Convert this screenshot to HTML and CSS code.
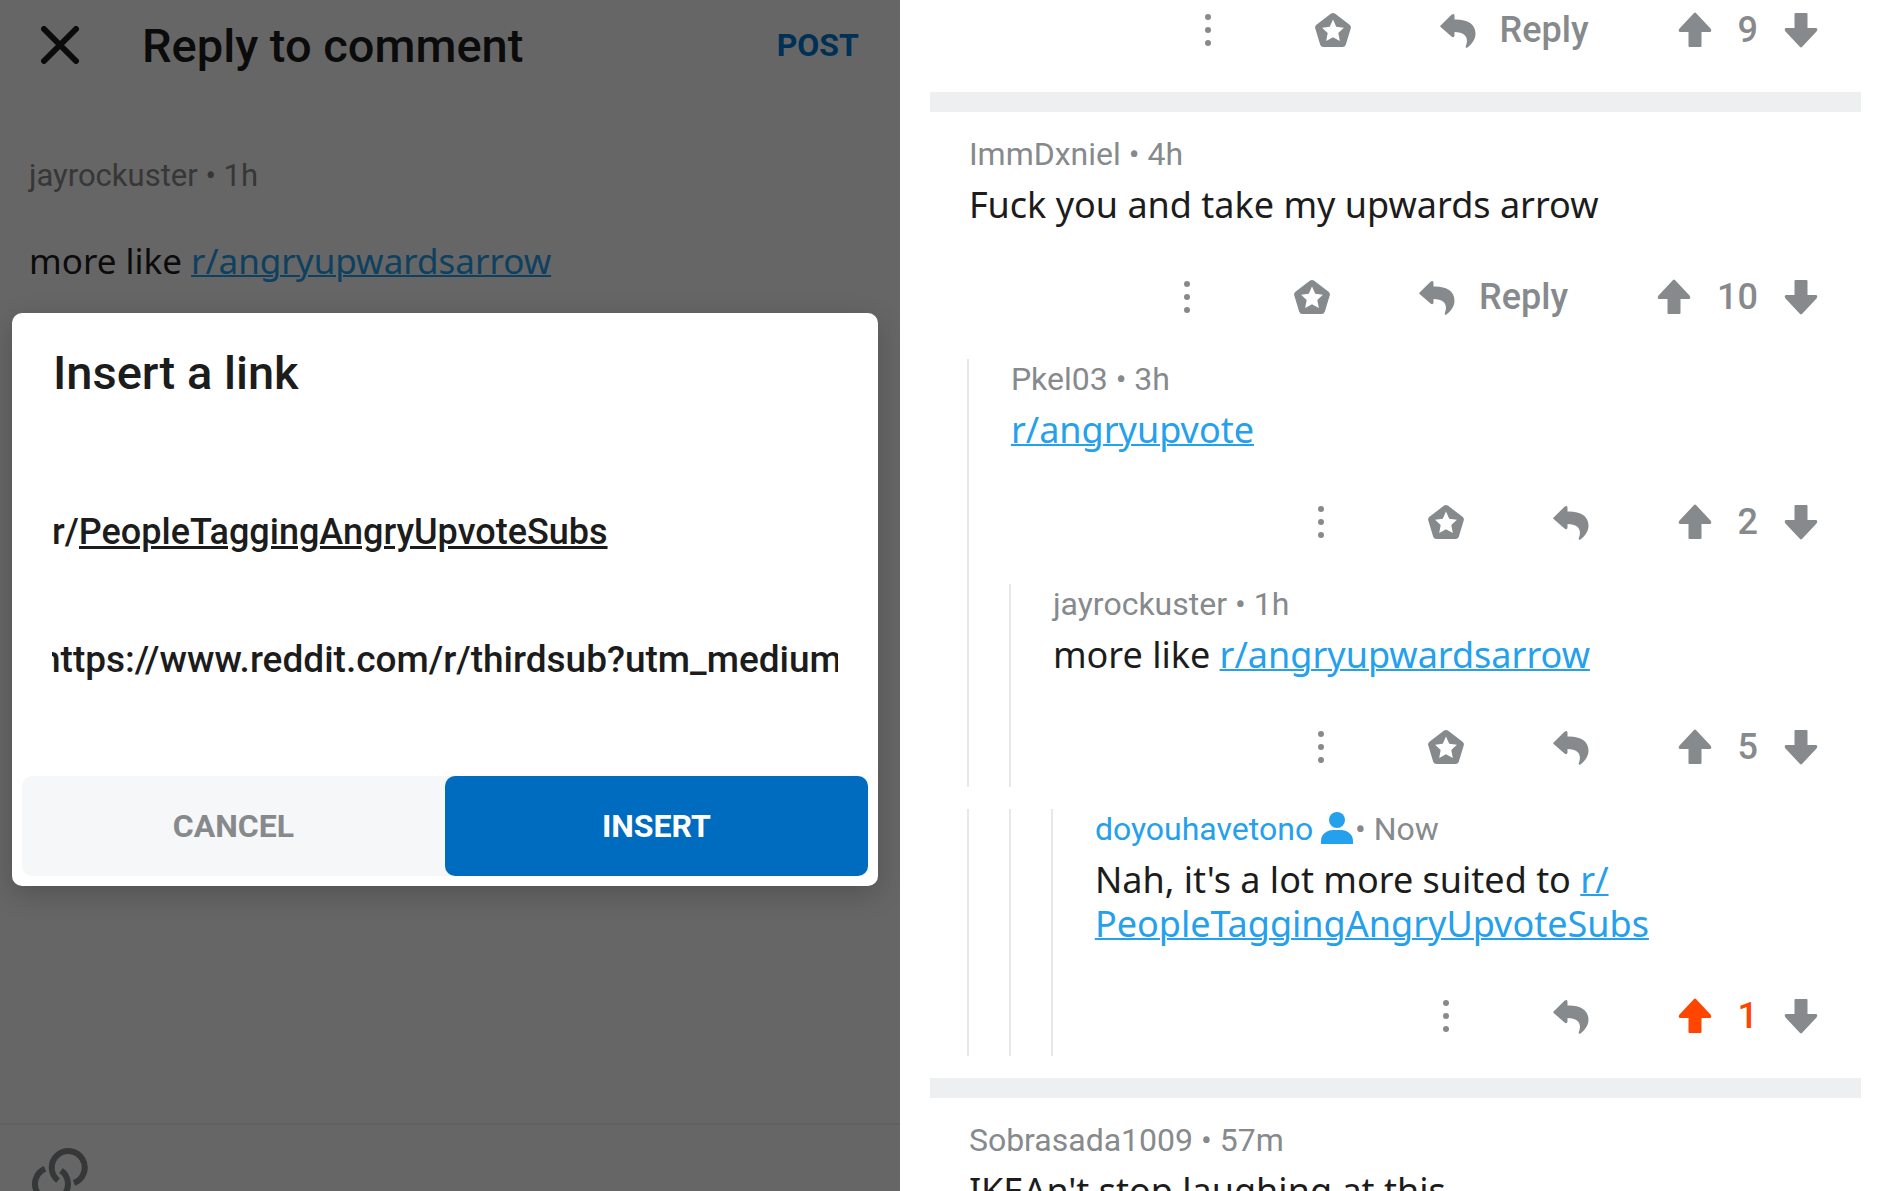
FILE: index.html
```html
<!DOCTYPE html>
<html lang="en">
<head>
  <meta charset="UTF-8">
  <meta name="viewport" content="width=device-width, initial-scale=1.0">
  <title>Reply to comment</title>
  <link rel="stylesheet" href="styles.css">
</head>
<body>
  <!-- Icons -->
  <svg class="sprite" aria-hidden="true">
    <symbol id="dots" viewBox="0 0 36 36">
      <circle cx="18" cy="5" r="3"/><circle cx="18" cy="18" r="3"/><circle cx="18" cy="31" r="3"/>
    </symbol>
    <symbol id="award" viewBox="-1 0 38 36">
      <path fill-rule="evenodd" d="M16 0.700Q18 -0.700 20 0.700L35.500 12.500Q37.500 14 36.700 16.500L31.500 33.500Q30.800 36 28 36H8Q5.200 36 4.500 33.500L-0.700 16.500Q-1.500 14 0.500 12.500ZM18 7L14.600 14.500L6.500 15.500L12.400 21.200L10.800 29.500L18 25.600L25.200 29.500L23.600 21.200L29.500 15.500L21.400 14.500Z"/>
    </symbol>
    <symbol id="reply" viewBox="0 0 36 36">
      <path d="M0.600 13.500L11.500 2.800Q14.500 0.500 14.500 4V7.500C27 7 35.500 12 35.500 21.500C35.500 27 32.500 31.500 27.500 35.500Q25.500 36.500 25.700 34.500C29 26.500 26 20 14.500 20V23.500Q14 26.500 11.500 24.500L0.600 14.900Q-0.200 14.200 0.600 13.500Z"/>
    </symbol>
    <symbol id="up" viewBox="0 0 34 36">
      <path d="M15.800 1.200Q17 0 18.200 1.200L32.500 16.500Q34.500 20 31.500 20H23.500V34Q23.500 35 22.500 35H11.500Q10.500 35 10.500 34V20H2.500Q-0.500 20 1.500 16.500Z"/>
    </symbol>
    <symbol id="down" viewBox="0 0 34 36">
      <path d="M15.800 34.800Q17 36 18.200 34.800L32.500 19.500Q34.500 16 31.500 16H23.500V2Q23.500 1 22.500 1H11.500Q10.500 1 10.500 2V16H2.500Q-0.500 16 1.500 19.500Z"/>
    </symbol>
  </svg>

  <div class="app">
    <section class="composer">
      <header class="composer-header">
        <button class="close" aria-label="Close">
          <svg width="38" height="38" viewBox="0 0 38 38"><path d="M3 3L35 35M35 3L3 35" stroke="#1c1c1c" stroke-width="6" stroke-linecap="round"/></svg>
        </button>
        <h1>Reply to comment</h1>
        <button class="post">POST</button>
      </header>
      <div class="parent">
        <p class="meta">jayrockuster • 1h</p>
        <p class="text">more like <a href="#">r/angryupwardsarrow</a></p>
      </div>
      <footer class="toolbar">
        <button aria-label="Add link">
          <svg width="56" height="56" viewBox="0 0 56 56" fill="none" stroke="#878a8c" stroke-width="6">
            <path d="M26 32.500A16.500 16.500 0 1 1 42 35"/>
            <path d="M13 20.800A16.500 16.500 0 1 0 29 22.500"/>
          </svg>
        </button>
      </footer>

      <div class="overlay">
        <form class="dialog" role="dialog" aria-labelledby="dialogTitle">
          <h2 id="dialogTitle">Insert a link</h2>
          <div class="field">
            <label for="linkName">r/</label>
            <input class="composing" type="text" id="linkName" value="PeopleTaggingAngryUpvoteSubs" spellcheck="false">
          </div>
          <div class="field url">
            <input type="text" id="linkUrl" aria-label="Link" value="https://www.reddit.com/r/thirdsub?utm_medium=android_app" spellcheck="false">
          </div>
          <div class="dialog-buttons">
            <button class="cancel" type="button">CANCEL</button>
            <button class="insert" type="button">INSERT</button>
          </div>
        </form>
      </div>
    </section>

    <main class="feed">
      <div class="actions first">
        <button aria-label="More"><svg class="icon"><use href="#dots"/></svg></button>
        <button aria-label="Give award"><svg class="icon"><use href="#award"/></svg></button>
        <button><svg class="icon"><use href="#reply"/></svg>Reply</button>
        <div class="votes">
          <button aria-label="Upvote"><svg class="arrow"><use href="#up"/></svg></button>
          <span>9</span>
          <button aria-label="Downvote"><svg class="arrow"><use href="#down"/></svg></button>
        </div>
      </div>

      <div class="separator"></div>

      <article class="comment top">
        <div class="content">
          <p class="meta">ImmDxniel • 4h</p>
          <p class="text">Fuck you and take my upwards arrow</p>
          <div class="actions">
            <button aria-label="More"><svg class="icon"><use href="#dots"/></svg></button>
            <button aria-label="Give award"><svg class="icon"><use href="#award"/></svg></button>
            <button><svg class="icon"><use href="#reply"/></svg>Reply</button>
            <div class="votes">
              <button aria-label="Upvote"><svg class="arrow"><use href="#up"/></svg></button>
              <span>10</span>
              <button aria-label="Downvote"><svg class="arrow"><use href="#down"/></svg></button>
            </div>
          </div>
        </div>
      </article>

      <article class="comment">
        <i class="line"></i>
        <div class="content">
          <p class="meta">Pkel03 • 3h</p>
          <p class="text"><a href="#">r/angryupvote</a></p>
          <div class="actions">
            <button aria-label="More"><svg class="icon"><use href="#dots"/></svg></button>
            <button aria-label="Give award"><svg class="icon"><use href="#award"/></svg></button>
            <button aria-label="Reply"><svg class="icon"><use href="#reply"/></svg></button>
            <div class="votes">
              <button aria-label="Upvote"><svg class="arrow"><use href="#up"/></svg></button>
              <span>2</span>
              <button aria-label="Downvote"><svg class="arrow"><use href="#down"/></svg></button>
            </div>
          </div>
        </div>
      </article>

      <article class="comment last">
        <i class="line"></i>
        <i class="line"></i>
        <div class="content">
          <p class="meta">jayrockuster • 1h</p>
          <p class="text">more like <a href="#">r/angryupwardsarrow</a></p>
          <div class="actions">
            <button aria-label="More"><svg class="icon"><use href="#dots"/></svg></button>
            <button aria-label="Give award"><svg class="icon"><use href="#award"/></svg></button>
            <button aria-label="Reply"><svg class="icon"><use href="#reply"/></svg></button>
            <div class="votes">
              <button aria-label="Upvote"><svg class="arrow"><use href="#up"/></svg></button>
              <span>5</span>
              <button aria-label="Downvote"><svg class="arrow"><use href="#down"/></svg></button>
            </div>
          </div>
        </div>
      </article>

      <article class="comment last">
        <i class="line"></i>
        <i class="line"></i>
        <i class="line"></i>
        <div class="content">
          <p class="meta"><a href="#">doyouhavetono</a>
            <svg class="user" viewBox="0 0 32 32"><circle cx="16" cy="8" r="8"/><path d="M0 32V29C0 22 6 18 12 18H20C26 18 32 22 32 29V32Z"/></svg>
            • Now</p>
          <p class="text">Nah, it's a lot more suited to <a href="#">r/<wbr>PeopleTaggingAngryUpvoteSubs</a></p>
          <div class="actions">
            <button aria-label="More"><svg class="icon"><use href="#dots"/></svg></button>
            <button aria-label="Reply"><svg class="icon"><use href="#reply"/></svg></button>
            <div class="votes upvoted">
              <button aria-label="Upvote"><svg class="arrow"><use href="#up"/></svg></button>
              <span>1</span>
              <button aria-label="Downvote"><svg class="arrow"><use href="#down"/></svg></button>
            </div>
          </div>
        </div>
      </article>

      <div class="separator"></div>

      <article class="comment top">
        <div class="content">
          <p class="meta">Sobrasada1009 • 57m</p>
          <p class="text">IKEAn't stop laughing at this</p>
        </div>
      </article>
    </main>
  </div>

  <script>
    // Keep the url field scrolled just past its start
    document.getElementById('linkUrl').scrollLeft = 12;
  </script>
</body>
</html>
```
FILE: styles.css
```css
* {
  box-sizing: border-box;
}
body {
  margin: 0;
  font-family: Roboto, "Noto Sans", sans-serif;
  color: #1c1c1c;
  background: #fff;
}
h1, h2, p {
  margin: 0;
}
button {
  display: flex;
  align-items: center;
  padding: 0;
  border: none;
  background: none;
  color: inherit;
  font: inherit;
  cursor: pointer;
}
a {
  color: #24a0ed;
}
.sprite {
  display: none;
}
.app {
  display: grid;
  grid-template-columns: 23fr 25fr;
  height: 100vh;
  overflow: hidden;
}

/* Reply screen */
.composer {
  position: relative;
  display: flex;
  flex-direction: column;
  min-height: 0;
}
.composer-header {
  display: flex;
  align-items: center;
  height: 90px;
  padding: 0 41px;
}
.composer-header h1 {
  flex: 1;
  margin-left: 63px;
  font-size: 47px;
  font-weight: 500;
}
.post {
  color: #0079d3;
  font-size: 32px;
  font-weight: 700;
}
.parent {
  flex: 1;
  padding: 66px 29px;
}
.parent .meta {
  font-size: 31px;
}
.parent .text {
  margin-top: 43px;
  font-size: 35px;
}
.toolbar {
  height: 68px;
  padding: 23px 32px;
  border-top: 2px solid #edeff1;
  overflow: hidden;
}
.overlay {
  position: absolute;
  inset: 0;
  display: flex;
  align-items: center;
  padding: 8px 22px 0 12px;
  background: rgba(0, 0, 0, 0.6);
}

/* Insert link dialog */
.dialog {
  flex: 1;
  min-width: 0;
  padding: 10px;
  border-radius: 10px;
  background: #fff;
  box-shadow: 0 8px 28px rgba(0, 0, 0, 0.2);
}
.dialog h2 {
  margin: 20px 31px 92px;
  font-size: 47px;
  line-height: 60px;
  font-weight: 500;
}
.field {
  display: flex;
  align-items: center;
  height: 74px;
  margin: 0 30px 53px;
  font-size: 36px;
  font-weight: 500;
}
.url {
  margin-bottom: 80px;
  font-size: 37px;
}
.field input {
  flex: 1;
  min-width: 0;
  padding: 0;
  border: none;
  outline: none;
  background: none;
  color: inherit;
  font: inherit;
}
.field .composing {
  text-decoration: underline;
}
.dialog-buttons {
  display: flex;
  background: #f6f7f8;
  border-radius: 10px;
}
.dialog-buttons button {
  flex: 1;
  justify-content: center;
  height: 100px;
  border-radius: 10px;
  font-size: 32px;
  font-weight: 700;
}
.cancel {
  color: #878a8c;
}
.insert {
  background: #006cbf;
  color: #fff;
}

/* Comments */
.feed {
  min-width: 0;
  overflow: hidden;
}
.separator {
  height: 20px;
  margin: 22px 17px 22px 30px;
  background: #edeff1;
}
.comment {
  display: flex;
  padding-left: 67px;
}
.last {
  margin-bottom: 22px;
}
.line {
  flex: none;
  width: 42px;
  border-left: 2px solid #e5e7e8;
}
.content {
  flex: 1;
  min-width: 0;
  padding: 0 0 22px 2px;
}
.last .content {
  padding-bottom: 0;
}
.meta {
  color: #878a8c;
  font-size: 32px;
  line-height: 40px;
}
.meta a {
  text-decoration: none;
}
.user {
  width: 32px;
  height: 32px;
  margin-right: -6px;
  vertical-align: -4px;
  fill: #24a0ed;
}
.text {
  margin-top: 9px;
  padding-right: 60px;
  font-family: "Noto Sans", sans-serif;
  font-size: 36px;
  line-height: 44px;
}
.text a {
  text-decoration-thickness: 2px;
}
.actions {
  display: flex;
  justify-content: flex-end;
  align-items: center;
  gap: 89px;
  height: 80px;
  margin-top: 30px;
  padding-right: 60px;
  color: #878a8c;
  font-size: 36px;
  font-weight: 500;
}
.actions button {
  gap: 24px;
}
.first {
  height: 60px;
  margin: 0 0 32px;
}
.icon {
  width: 36px;
  height: 36px;
  overflow: visible;
  fill: #878a8c;
}
.arrow {
  width: 34px;
  height: 36px;
  fill: #878a8c;
}
.votes {
  display: flex;
  align-items: center;
  gap: 26px;
}
.upvoted {
  color: #ff4500;
}
.upvoted button:first-child .arrow {
  fill: #ff4500;
}
```
